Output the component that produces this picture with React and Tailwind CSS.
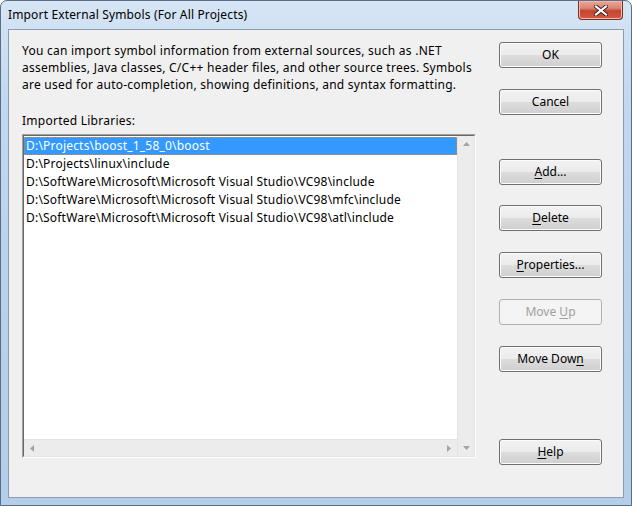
import React from 'react';

const libraries = [
  'D:\\Projects\\boost_1_58_0\\boost',
  'D:\\Projects\\linux\\include',
  'D:\\SoftWare\\Microsoft\\Microsoft Visual Studio\\VC98\\include',
  'D:\\SoftWare\\Microsoft\\Microsoft Visual Studio\\VC98\\mfc\\include',
  'D:\\SoftWare\\Microsoft\\Microsoft Visual Studio\\VC98\\atl\\include',
];

const font = { fontFamily: '"Noto Sans", "Open Sans", sans-serif' };

const Btn = ({ children, disabled, className = '' }) => (
  <div
    className={`h-[26px] w-[103px] rounded-[3px] border flex items-center justify-center text-[12px] ${
      disabled
        ? 'border-[#adb2b5] bg-[#f4f4f4] text-[#a0a0a0]'
        : 'border-[#707070] bg-[linear-gradient(to_bottom,#f2f2f2_0%,#ebebeb_50%,#dddddd_51%,#cfcfcf_100%)] text-black shadow-[inset_0_0_0_1px_#fcfcfc]'
    } ${className}`}
  >
    <span className="whitespace-pre">{children}</span>
  </div>
);

const U = ({ children }) => <span className="underline underline-offset-2">{children}</span>;

const Arrow = ({ dir }) => {
  const pts = {
    up: '0,4 3.5,0 7,4',
    down: '0,0 7,0 3.5,4',
    left: '4,0 4,7 0,3.5',
    right: '0,0 0,7 4,3.5',
  }[dir];
  const horiz = dir === 'left' || dir === 'right';
  return (
    <svg width={horiz ? 4 : 7} height={horiz ? 7 : 4} viewBox={horiz ? '0 0 4 7' : '0 0 7 4'}>
      <polygon points={pts} fill="#a3a3a3" />
    </svg>
  );
};

export default function App() {
  return (
    <div
      style={font}
      className="w-[632px] h-[506px] flex flex-col rounded-t-[7px] border border-[#5b6d84] bg-[linear-gradient(to_bottom,#d6e5f5_0%,#c2d8ef_20%,#b9d1ea_60%,#b4cde8_100%)] overflow-hidden"
    >
      {/* Title bar */}
      <div className="h-[28px] flex items-start shrink-0">
        <div className="pl-[7px] pt-[5px] text-[12px] tracking-[0.15px] text-black">Import External Symbols (For All Projects)</div>
        <div className="ml-auto mr-[8px] w-[45px] h-[19px] rounded-b-[4px] border border-t-0 border-[#7c2f26] bg-[linear-gradient(to_bottom,#e9a899_0%,#d98472_40%,#c4432f_55%,#d35a43_100%)] flex items-center justify-center shadow-[inset_0_0_0_1px_#f0b8a8]">
          <svg width="14" height="11" viewBox="0 0 14 11">
            <path d="M2 1.5 L12 9.5 M12 1.5 L2 9.5" stroke="#3e1d18" strokeWidth="4" strokeLinecap="square" />
            <path d="M2 1.5 L12 9.5 M12 1.5 L2 9.5" stroke="#ffffff" strokeWidth="2.2" strokeLinecap="square" />
          </svg>
        </div>
      </div>

      {/* Client area */}
      <div className="flex-1 mx-[7px] mb-[7px] border border-[#8a9cb2] bg-[#f0f0f0] flex gap-[23px] pl-[13px] pt-[12px]">
        {/* Left column */}
        <div className="w-[454px] flex flex-col">
          <p className="text-[12px] leading-[17px] tracking-[0.25px] text-black whitespace-nowrap">
            You can import symbol information from external sources, such as .NET
            <br />
            assemblies, Java classes, C/C++ header files, and other source trees. Symbols
            <br />
            are used for auto-completion, showing definitions, and syntax formatting.
          </p>
          <div className="mt-[19px] text-[12px] leading-[17px] tracking-[0.25px] text-black">Imported Libraries:</div>
          <div className="mt-[5px] h-[324px] border border-t-[#a0a0a0] border-l-[#a0a0a0] border-b-white border-r-white">
            <div className="h-full border border-t-[#696969] border-l-[#696969] border-b-[#e3e3e3] border-r-[#e3e3e3] bg-white flex">
              <div className="flex-1 flex flex-col">
                <div className="flex-1 pt-px">
                  {libraries.map((lib, i) => (
                    <div
                      key={lib}
                      className={`h-[18px] pl-px text-[12px] leading-[16px] tracking-[0.2px] whitespace-nowrap ${
                        i === 0
                          ? 'bg-[#3399ff] text-white border border-dotted border-[#d58a3a]'
                          : 'text-black border border-transparent'
                      }`}
                    >
                      {lib}
                    </div>
                  ))}
                </div>
                {/* Horizontal scrollbar */}
                <div className="h-[17px] bg-[#ececec] border-t border-[#e4e4e4] flex items-center justify-between px-[6px]">
                  <Arrow dir="left" />
                  <Arrow dir="right" />
                </div>
              </div>
              {/* Vertical scrollbar */}
              <div className="w-[17px] bg-[#ececec] border-l border-[#e4e4e4] flex flex-col items-center justify-between py-[6px]">
                <Arrow dir="up" />
                <Arrow dir="down" />
              </div>
            </div>
          </div>
        </div>

        {/* Right column */}
        <div className="flex flex-col">
          <Btn>OK</Btn>
          <Btn className="mt-[21px]">Cancel</Btn>
          <Btn className="mt-[44px]"><U>A</U>dd...</Btn>
          <Btn className="mt-[20px]"><U>D</U>elete</Btn>
          <Btn className="mt-[21px]"><U>P</U>roperties...</Btn>
          <Btn disabled className="mt-[21px]">Move <U>U</U>p</Btn>
          <Btn className="mt-[21px]">Move Dow<U>n</U></Btn>
          <Btn className="mt-[67px]"><U>H</U>elp</Btn>
        </div>
      </div>
    </div>
  );
}
